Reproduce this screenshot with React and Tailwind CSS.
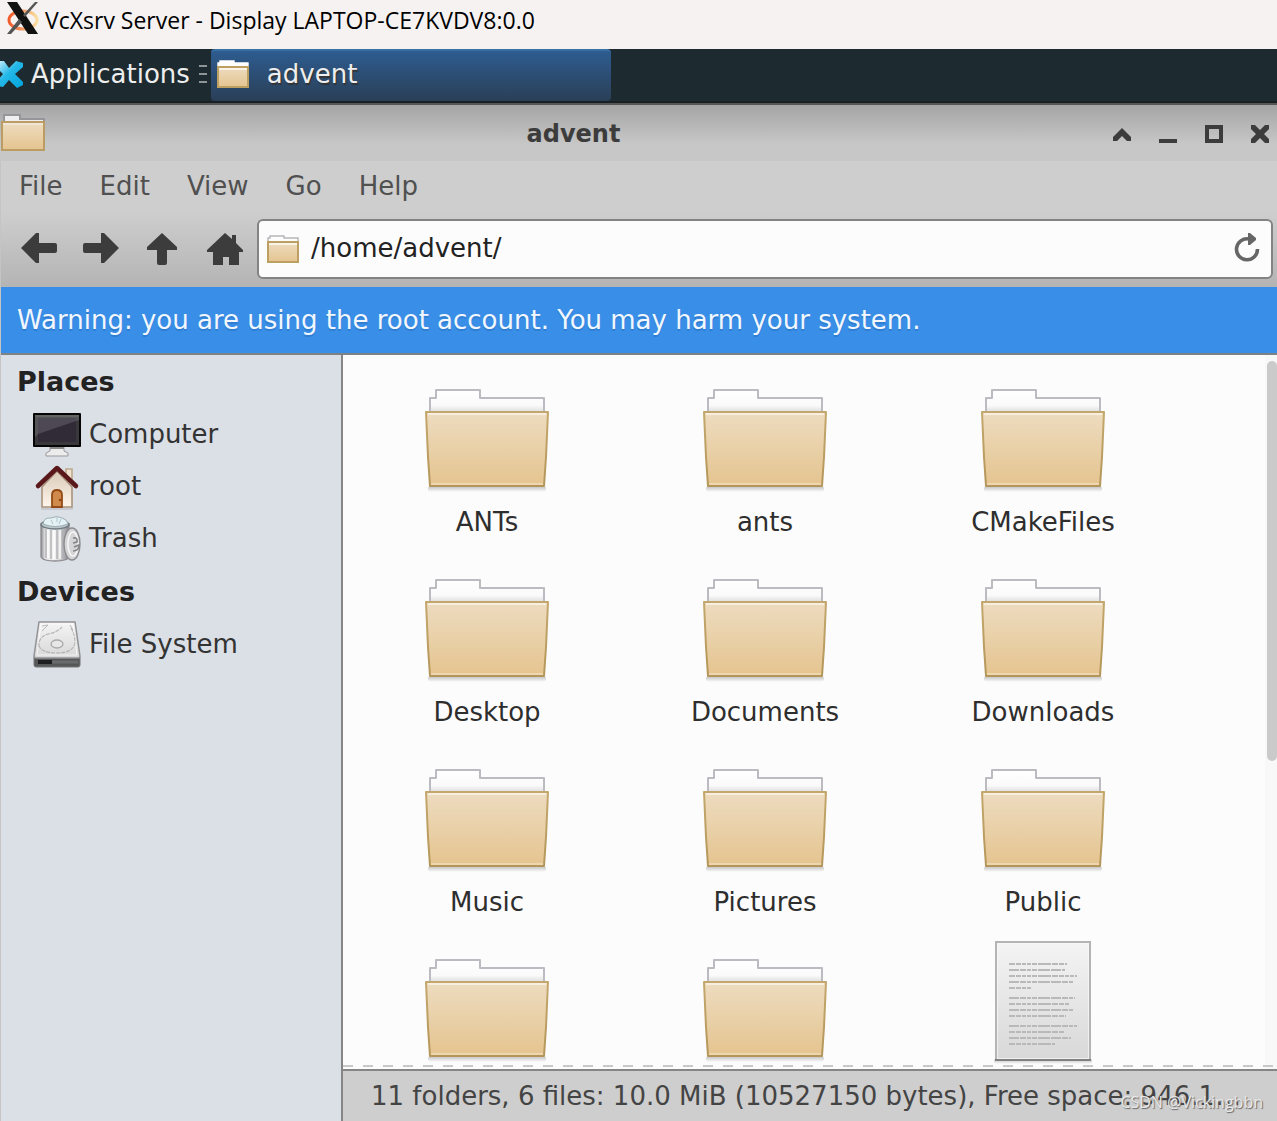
import React from "react";

const entries = [
  { name: "ANTs", kind: "folder" },
  { name: "ants", kind: "folder" },
  { name: "CMakeFiles", kind: "folder" },
  { name: "Desktop", kind: "folder" },
  { name: "Documents", kind: "folder" },
  { name: "Downloads", kind: "folder" },
  { name: "Music", kind: "folder" },
  { name: "Pictures", kind: "folder" },
  { name: "Public", kind: "folder" },
  { kind: "folder" },
  { kind: "folder" },
  { kind: "file" },
];

function Defs() {
  return (
    <svg width="0" height="0" className="absolute" aria-hidden="true">
      <defs>
        <linearGradient id="tan" x1="0" y1="0" x2="0" y2="1">
          <stop offset="0" stopColor="#eddcc0" />
          <stop offset="1" stopColor="#e5c48f" />
        </linearGradient>
        <linearGradient id="tanEdge" x1="0" y1="0" x2="0" y2="1">
          <stop offset="0" stopColor="#c4a76c" />
          <stop offset="1" stopColor="#b4965a" />
        </linearGradient>
        <linearGradient id="paper" x1="0" y1="0" x2="0" y2="1">
          <stop offset="0" stopColor="#f4f4f4" />
          <stop offset="1" stopColor="#d8d8d8" />
        </linearGradient>
        <linearGradient id="back" x1="0" y1="0" x2="0" y2="1">
          <stop offset="0" stopColor="#ffffff" />
          <stop offset="0.7" stopColor="#fafafa" />
          <stop offset="1" stopColor="#dedee0" />
        </linearGradient>
        <linearGradient id="cyan" x1="0" y1="0" x2="1" y2="1">
          <stop offset="0" stopColor="#d8f4fc" />
          <stop offset="0.45" stopColor="#25b8e8" />
          <stop offset="1" stopColor="#00a5dc" />
        </linearGradient>
        <linearGradient id="metal" x1="0" y1="0" x2="1" y2="0">
          <stop offset="0" stopColor="#8e8e92" />
          <stop offset="0.15" stopColor="#e6e6e8" />
          <stop offset="0.5" stopColor="#f2f2f2" />
          <stop offset="0.8" stopColor="#b5b5b9" />
          <stop offset="1" stopColor="#85858a" />
        </linearGradient>
        <linearGradient id="ring" x1="0" y1="0" x2="1" y2="0">
          <stop offset="0" stopColor="#f15a2b" />
          <stop offset="1" stopColor="#f9dfa0" />
        </linearGradient>
        <linearGradient id="shadow" x1="0" y1="0" x2="0" y2="1">
          <stop offset="0" stopColor="#000" stopOpacity="0.25" />
          <stop offset="1" stopColor="#000" stopOpacity="0" />
        </linearGradient>
        <linearGradient id="wall" x1="0" y1="0" x2="0" y2="1">
          <stop offset="0" stopColor="#d9cab9" />
          <stop offset="1" stopColor="#fff5ea" />
        </linearGradient>
      </defs>
    </svg>
  );
}

function BigFolder() {
  return (
    <svg width="128" height="128" viewBox="0 0 128 128" aria-hidden="true">
      <rect x="5" y="119" width="118" height="6" rx="3" fill="url(#shadow)" />
      <path d="M7 45V31H13V23H57V31H121V45Z" fill="url(#back)" stroke="#bcbbc2" strokeWidth="2" strokeLinejoin="round" />
      <path d="M3 45H125L123 90L121 119H7L5 90Z" fill="url(#tan)" stroke="url(#tanEdge)" strokeWidth="2" strokeLinejoin="round" />
      <path d="M5 47H123" stroke="#f7eee0" strokeWidth="2" />
      <path d="M8 117H120" stroke="#eed6ae" strokeWidth="2" />
    </svg>
  );
}

function DocumentIcon() {
  const lines = [
    [28, 58], [34, 56], [40, 68], [46, 65], [52, 22],
    [62, 66], [68, 60], [74, 65], [80, 57],
    [90, 68], [96, 56], [102, 62], [108, 46],
  ];
  return (
    <svg width="128" height="128" viewBox="0 0 128 128" aria-hidden="true">
      <rect x="15" y="122" width="98" height="5" rx="2" fill="url(#shadow)" />
      <rect x="17" y="5" width="94" height="118" fill="url(#paper)" stroke="#b4b4b4" strokeWidth="2" />
      <rect x="18.5" y="6.5" width="91" height="115" fill="none" stroke="#f8f8f8" strokeOpacity="0.7" />
      <path d="M16 123H112" stroke="#808080" strokeWidth="2" />
      {lines.map(([y, w], i) => (
        <path
          key={y}
          d={`M30 ${y - 1}H${30 + w}`}
          stroke="#b9b9b9"
          strokeWidth="2"
          strokeDasharray={i % 2 ? "10 1 6 1 4 1 5 1 12 1" : "6 1 5 1 4 1 4 1 5 1 13 1"}
        />
      ))}
    </svg>
  );
}

function SmallFolder({ edge = "#9b9ba0" }) {
  return (
    <svg className="shrink-0" width="32" height="30" viewBox="0 0 32 30" aria-hidden="true">
      <path d="M1 9V4H3V2H17V4H31V9Z" fill="#fdfdfd" stroke={edge} strokeWidth="1.4" />
      <rect x="1" y="8" width="30" height="20" fill="url(#tan)" stroke="#bd9f62" strokeWidth="2" />
      <path d="M2 10H30" stroke="#faf3e7" strokeWidth="2" />
    </svg>
  );
}

function WindowFolder() {
  return (
    <svg width="44" height="40" viewBox="0 0 44 40" aria-hidden="true">
      <path d="M3 9V2H19V6H43V9Z" fill="#efeff0" stroke="#96969a" strokeWidth="2" />
      <rect x="1" y="9" width="42" height="28" fill="url(#tan)" stroke="#bb9c62" strokeWidth="2" />
      <path d="M2 11H42" stroke="#efe6d6" strokeWidth="2" />
    </svg>
  );
}

function XLogo() {
  return (
    <svg width="32" height="32" viewBox="0 0 32 32" aria-hidden="true">
      <ellipse cx="16" cy="18" rx="14" ry="9" fill="none" stroke="url(#ring)" strokeWidth="3" />
      <path d="M0 0H10L31 32H21Z" fill="#111" />
      <path d="M28 0H31L18 15L16 13ZM12 17L15 20L4 32H0Z" fill="#555" />
    </svg>
  );
}

function ComputerIcon() {
  return (
    <svg width="48" height="48" viewBox="0 0 48 48" aria-hidden="true">
      <path d="M17 36H31V41L35 43V46H13V43L17 41Z" fill="#ececec" stroke="#9b9b9e" />
      <path d="M17 37H31V39H17Z" fill="#888" />
      <rect x="0" y="3" width="48" height="34" rx="1" fill="#050505" />
      <rect x="2" y="5" width="44" height="30" fill="#3a383d" />
      <rect x="5" y="8" width="38" height="24" fill="#312b38" />
      <path d="M2 5H46V10L5 24L2 27Z" fill="#ffffff" fillOpacity="0.14" />
      <path d="M2 6H46" stroke="#686868" strokeWidth="1.5" />
    </svg>
  );
}

function HomeColor() {
  return (
    <svg width="48" height="48" viewBox="0 0 48 48" aria-hidden="true">
      <path d="M33 7H39V20H33Z" fill="#efe2d0" stroke="#bfa98c" strokeWidth="1.6" />
      <path d="M9 25L24 9L39 25V45H9Z" fill="url(#wall)" stroke="#a9937b" strokeWidth="1.6" />
      <path d="M8 47H40" stroke="#000" strokeOpacity="0.12" strokeWidth="1.5" />
      <path d="M19 45V33Q19 28 24 28Q29 28 29 33V45Z" fill="#cf8a4c" stroke="#934a16" strokeWidth="1.8" />
      <circle cx="27" cy="38" r="1.2" fill="#8d4210" />
      <path d="M5 24L24 6L43 24" fill="none" stroke="#5a181b" strokeWidth="4.5" strokeLinecap="round" strokeLinejoin="round" />
    </svg>
  );
}

function TrashIcon() {
  return (
    <svg width="48" height="48" viewBox="0 0 48 48" aria-hidden="true">
      <path d="M8 10V43Q10 47 22 47Q34 47 36 43V10Z" fill="url(#metal)" stroke="#8c8c90" strokeWidth="1.3" />
      <path d="M13 15V44M18 16V45M24 16V45M30 15V44" stroke="#b0b0b4" strokeWidth="1.4" />
      <path d="M15 16V44M21 16V45M27 16V45" stroke="#ffffff" strokeWidth="1.4" />
      <ellipse cx="22" cy="10.5" rx="14" ry="4.5" fill="#bcc6ca" stroke="#6e7b82" strokeWidth="1.4" />
      <path d="M10 10Q11 3 18 4Q24 1 29 4Q34 5 35 10Q22 15 10 10Z" fill="#e5f2f5" stroke="#9caeb6" />
      <path d="M18 6L20 10M24 2V8M28 5L26 10" stroke="#adc3cc" />
      <ellipse cx="39" cy="30" rx="8" ry="16" fill="#d5d5d8" stroke="#8c8c90" strokeWidth="1.4" />
      <ellipse cx="40" cy="30" rx="5" ry="12" fill="none" stroke="#f5f5f5" strokeWidth="1.6" />
      <path d="M40 24Q45 23 44 28L40 29M41 33L46 31Q46 37 40 37" fill="none" stroke="#85858a" strokeWidth="1.6" />
    </svg>
  );
}

function DriveIcon() {
  return (
    <svg width="48" height="48" viewBox="0 0 48 48" aria-hidden="true">
      <path d="M1 37H47V45Q47 47 45 47H3Q1 47 1 45Z" fill="#555657" stroke="#777" />
      <path d="M6 2H42L47 36Q47 38 45 38H3Q1 38 1 36Z" fill="url(#paper)" stroke="#939396" strokeWidth="1.5" />
      <path d="M8 4H40L44 35H4Z" fill="none" stroke="#fff" strokeOpacity="0.7" />
      <path d="M6 27Q5 17 15 14Q25 12 29 7M38 8Q42 14 42 23Q40 33 24 33Q9 33 6 26" fill="none" stroke="#b5b5b5" strokeWidth="1.2" strokeDasharray="4 1" />
      <ellipse cx="24" cy="24" rx="6" ry="4" fill="#e7e7e7" stroke="#aaa" strokeWidth="1.3" />
      <path d="M9 6L15 5L9 11M37 5L40 10" fill="none" stroke="#bbb" />
      <path d="M5 42H19" stroke="#1e1e1e" strokeWidth="4" />
      <path d="M19 42H45" stroke="#6a6b6c" strokeWidth="3" />
    </svg>
  );
}

const places = [
  { name: "Computer", Icon: ComputerIcon },
  { name: "root", Icon: HomeColor },
  { name: "Trash", Icon: TrashIcon },
];
const devices = [{ name: "File System", Icon: DriveIcon }];

const tools = [
  { name: "Back", d: "M2 18L17 3H20V13H36Q38 13 38 15V21Q38 23 36 23H20V33H17Z" },
  { name: "Forward", d: "M38 18L23 3H20V13H4Q2 13 2 15V21Q2 23 4 23H20V33H23Z" },
  { name: "Up", d: "M19 3L34 17V20H24V33Q24 35 22 35H16Q14 35 14 33V20H4V17Z" },
  { name: "Home", d: "M20 3L27 9V5H31V13L38 20V22H34V35H24V27H18V35H8V22H2V20Z" },
];

const windowButtons = [
  { name: "Shade", d: "M1 17V13L10 4L19 13V17H15L10 12L5 17Z" },
  { name: "Minimize", d: "M1 15H19V19H1Z" },
  { name: "Maximize", d: "M1 1H19V19H1ZM5 5V15H15V5Z" },
  { name: "Close", d: "M1 1H5L10 6L15 1H19V5L14 10L19 15V19H15L10 14L5 19H1V15L6 10L1 5Z" },
];

function SideGroup({ title, items }) {
  return (
    <section>
      <h2 className="flex h-[53px] items-center pl-4 text-[27px] font-bold text-[#222]">{title}</h2>
      <ul className="pb-px">
        {items.map(({ name, Icon }) => (
          <li key={name}>
            <button className="flex h-[52px] w-full items-center gap-2 pl-8 text-left">
              <Icon />
              {name}
            </button>
          </li>
        ))}
      </ul>
    </section>
  );
}

export default function App() {
  return (
    <div className="flex h-screen flex-col overflow-hidden bg-[#cecece] font-['DejaVu_Sans',sans-serif] text-[26px] leading-8 text-[#333]">
      <Defs />
      <header className="flex h-[49px] shrink-0 items-start gap-1.5 bg-[#f5f2f1] pl-[7px] pt-0.5 font-['Open_Sans',sans-serif] text-[23px] leading-9 text-black">
        <XLogo />
        <span>VcXsrv Server - Display LAPTOP-CE7KVDV8:0.0</span>
      </header>

      <nav className="flex h-14 shrink-0 border-b-2 border-[#555] bg-[#1d2b30] text-[#eee] shadow-[inset_0_-2px_0_#182024]">
        <button className="flex h-[50px] items-center gap-2">
          <svg width="23" height="28" viewBox="0 0 23 28" aria-hidden="true">
            <path d="M-4 1H4L9 8L16 1L23 3V7L15 14L23 22V25L17 28L9 20L3 27L-4 26V22L3 14L-4 7Z" fill="url(#cyan)" />
          </svg>
          Applications
        </button>
        <svg className="ml-2 mt-4 mr-1" width="9" height="18" viewBox="0 0 9 18" aria-hidden="true">
          <path d="M1 1H9M1 9H9M1 17H9" stroke="#8d9598" strokeWidth="2" />
        </svg>
        <button className="flex h-[52px] w-[400px] items-center gap-[18px] rounded border-t-2 border-[#3a6ea5] bg-linear-to-b from-[#2d5c90] to-[#2a3f57] pl-1.5 pb-1 text-left [text-shadow:1px_2px_1px_#333]">
          <SmallFolder edge="#ffffff" />
          advent
        </button>
      </nav>

      <div className="flex h-14 shrink-0 items-center bg-linear-to-b from-[#a5a5a5] to-[#c7c7c7] to-70% pl-px text-[#3c3c3c]">
        <WindowFolder />
        <h1 className="flex-1 pt-0.5 text-center text-[24px] font-bold">advent</h1>
        <div className="flex justify-end gap-[26px] pl-2.5 pr-[7px] pt-0.5">
          {windowButtons.map((b) => (
            <button key={b.name} aria-label={b.name}>
              <svg width="20" height="20" viewBox="0 0 20 20" aria-hidden="true">
                <path d={b.d} fill="#3c3c3c" fillRule="evenodd" />
              </svg>
            </button>
          ))}
        </div>
      </div>

      <div className="flex min-h-0 flex-1 flex-col border-l border-[#c4c4c4]">
        <nav className="flex h-[50px] shrink-0 items-center gap-[37px] pl-[18px] text-[#505050]">
          {["File", "Edit", "View", "Go", "Help"].map((m) => (
            <button key={m}>{m}</button>
          ))}
        </nav>

        <div className="flex h-[76px] shrink-0 items-center bg-linear-to-b from-[#cecece] to-[#b4b4b4] pl-[7px] pr-1">
          {tools.map((t) => (
            <button key={t.name} aria-label={t.name} className="flex w-[62px] shrink-0 justify-center">
              <svg width="40" height="38" viewBox="0 0 40 38" aria-hidden="true">
                <path d={t.d} fill="#3c3c3c" />
              </svg>
            </button>
          ))}
          <div className="ml-px flex h-[60px] min-w-0 flex-1 items-center gap-3 rounded-md border-2 border-[#838383] bg-[#fcfcfc] px-2">
            <SmallFolder edge="#b6b6bb" />
            <input aria-label="Location" defaultValue="/home/advent/" className="min-w-0 flex-1 bg-transparent pb-0.5 text-[#222] outline-none" />
            <button aria-label="Reload">
              <svg width="30" height="32" viewBox="0 0 30 32" aria-hidden="true">
                <path d="M16 6A10.5 10.5 0 1 0 24.5 16" fill="none" stroke="#666" strokeWidth="3.6" />
                <path d="M15 0H17L23 5V7L17 12H15Z" fill="#666" />
              </svg>
            </button>
          </div>
        </div>

        <p className="flex h-[68px] shrink-0 items-center border-b-2 border-[#7f8285] bg-[#398ee7] pl-4 text-[#f2f7fd] [text-shadow:0_2px_0_#2f7ed2]">
          Warning: you are using the root account. You may harm your system.
        </p>

        <div className="flex min-h-0 flex-1">
          <aside className="w-[342px] shrink-0 border-r-2 border-[#858585] bg-[#dbdfe6]">
            <SideGroup title="Places" items={places} />
            <SideGroup title="Devices" items={devices} />
          </aside>

          <div className="flex min-w-0 flex-1 flex-col">
            <main className="relative min-h-0 flex-1 overflow-hidden bg-[#fcfcfc]">
              <ul className="grid grid-cols-[repeat(auto-fill,278px)] gap-y-[18px] pl-[5px] pt-3 text-[#2e2e2e]">
                {entries.map((e, i) => (
                  <li key={i} className="flex flex-col items-center gap-[11px]">
                    {e.kind === "folder" ? <BigFolder /> : <DocumentIcon />}
                    {e.name && <span className="pb-px">{e.name}</span>}
                  </li>
                ))}
              </ul>
              <div className="absolute bottom-0 right-0 top-0 w-3 bg-[#f8f8f8] pl-0.5 pt-1.5">
                <div className="h-[400px] rounded-md bg-[#cacaca]" />
              </div>
              <svg className="absolute bottom-[2px] left-0 h-0.5 w-full" aria-hidden="true">
                <path d="M0 1H4000" stroke="#c8c8c8" strokeWidth="2" strokeDasharray="10 10" />
              </svg>
            </main>
            <footer className="relative flex h-[52px] shrink-0 items-center whitespace-nowrap border-t-2 border-[#858585] pl-7 text-[#444]">
              11 folders, 6 files: 10.0 MiB (10527150 bytes), Free space: 946.1…
              <span className="absolute right-[14px] top-[19px] font-['Open_Sans',sans-serif] text-[16px] leading-6 text-[#e8e8e8] [text-shadow:1px_1px_1px_#666]">
                CSDN @Vickingbbn
              </span>
            </footer>
          </div>
        </div>
      </div>
    </div>
  );
}
